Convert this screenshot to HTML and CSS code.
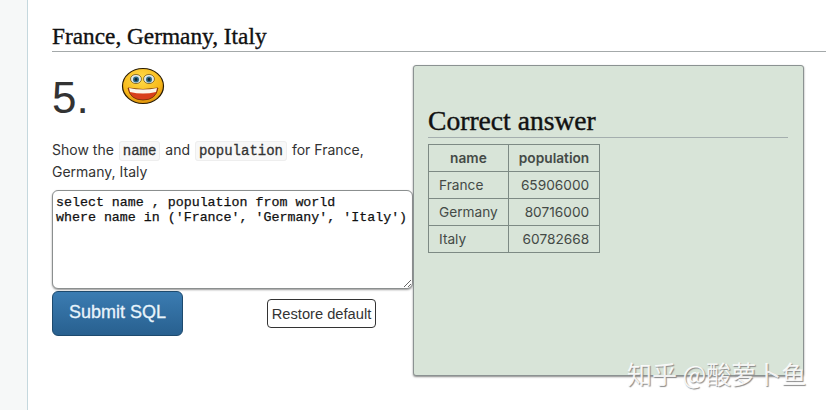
FILE: index.html
```html
<!DOCTYPE html>
<html>
<head>
    <meta charset="utf-8">
    <title>France, Germany, Italy</title>
    <link rel="stylesheet" href="styles.css">
</head>
<body>
    <div class="page">
        <div class="sidebar"></div>
        <div class="content">
            <h2 class="section-title">France, Germany, Italy</h2>
            <div class="quiz">
                <div class="question">
                    <div class="question-head">
                        <span class="number">5.</span>
                        <svg class="smiley" width="44" height="38" viewBox="0 0 44 38">
                            <defs>
                                <radialGradient id="face" cx="0.45" cy="0.3" r="0.75">
                                    <stop offset="0" stop-color="#ffdc4a"/>
                                    <stop offset="0.65" stop-color="#f8b91a"/>
                                    <stop offset="1" stop-color="#d98a08"/>
                                </radialGradient>
                            </defs>
                            <ellipse cx="22" cy="19" rx="20.5" ry="17.5" fill="url(#face)" stroke="#2a1c04" stroke-width="1.2"/>
                            <ellipse cx="15" cy="12" rx="5.5" ry="4.6" fill="#dfe6e4" stroke="#7a5a10" stroke-width="0.8"/>
                            <ellipse cx="28" cy="12" rx="5.5" ry="4.6" fill="#dfe6e4" stroke="#7a5a10" stroke-width="0.8"/>
                            <circle cx="15" cy="12.5" r="3" fill="#2c6a86"/>
                            <circle cx="28" cy="12.5" r="3" fill="#2c6a86"/>
                            <circle cx="15" cy="12.5" r="1.4" fill="#10222c"/>
                            <circle cx="28" cy="12.5" r="1.4" fill="#10222c"/>
                            <path d="M7 21 Q22 24 37 21 Q35 33 22 33 Q9 33 7 21 Z" fill="#d8401a" stroke="#6b2a08" stroke-width="0.8"/>
                            <path d="M8 21 Q22 24 36 21 L35 25 Q22 28 9 25 Z" fill="#fbf6ea"/>
                        </svg>
                    </div>
                    <p class="prompt">Show the <code>name</code> and <code>population</code> for France, Germany, Italy</p>
                    <textarea class="sql" spellcheck="false">select name , population from world
where name in ('France', 'Germany', 'Italy')</textarea>
                    <div class="actions">
                        <button class="submit">Submit SQL</button>
                        <button class="restore">Restore default</button>
                    </div>
                </div>
                <div class="answer">
                    <h2 class="answer-title">Correct answer</h2>
                    <table class="result">
                        <tr><th>name</th><th>population</th></tr>
                        <tr><td>France</td><td class="num">65906000</td></tr>
                        <tr><td>Germany</td><td class="num">80716000</td></tr>
                        <tr><td>Italy</td><td class="num">60782668</td></tr>
                    </table>
                </div>
            </div>
        </div>
    </div>
    <div class="watermark">知乎 @酸萝卜鱼</div>
</body>
</html>
```

FILE: styles.css
```css
html, body{
    margin: 0;
    height: 410px;
    overflow: hidden;
    background-color: #ffffff;
}

body{
    position: relative;
    font-family: "Inter", "Liberation Sans", sans-serif;
    color: #333333;
}

.page{
    display: flex;
    height: 410px;
}

.sidebar{
    width: 27px;
    flex-shrink: 0;
    background-color: #f6f8f8;
    border-right: 1px solid #c5d8de;
}

.content{
    flex: 1;
    padding-left: 24px;
    min-width: 0;
}

.section-title{
    margin: 24px 0 0;
    height: 27px;
    line-height: 25px;
    font-family: "Liberation Serif", serif;
    font-size: 23.3px;
    font-weight: 400;
    -webkit-text-stroke: 0.35px #111111;
    color: #111111;
    border-bottom: 1px solid #a4a9aa;
}

.quiz{
    display: flex;
    align-items: flex-start;
    margin-top: 14px;
}

.question{
    width: 361px;
    flex-shrink: 0;
}

.question-head{
    display: flex;
    align-items: flex-start;
    height: 73px;
}

.number{
    margin-top: 7px;
    width: 69px;
    font-family: "Liberation Sans", sans-serif;
    font-size: 44px;
    line-height: 50px;
    color: #333333;
}

.smiley{
    margin-top: 1px;
}

.prompt{
    margin: 0 0 7px;
    width: 330px;
    font-size: 14px;
    line-height: 22px;
    color: #333333;
}

code{
    font-family: "Liberation Mono", monospace;
    font-size: 14px;
    line-height: 1;
    -webkit-text-stroke: 0.3px #333333;
    color: #333333;
    background-color: #f8f8f8;
    border: 1px solid #eeeeee;
    border-radius: 3px;
    margin: 0 1px;
    padding: 1px 3px;
}

.sql{
    display: block;
    box-sizing: border-box;
    width: 361px;
    height: 99px;
    margin: 0;
    padding: 4px 3px;
    border: 1px solid #8b8f8f;
    border-radius: 6px;
    box-shadow: 0 1px 2px #999999;
    font-family: "Liberation Mono", monospace;
    font-size: 13.3px;
    -webkit-text-stroke: 0.25px #111111;
    line-height: 15px;
    color: #111111;
    background-color: #ffffff;
    white-space: pre;
    overflow: hidden;
}

.actions{
    display: flex;
    align-items: center;
    margin-top: 2px;
}

.submit{
    width: 131px;
    height: 45px;
    border: 1px solid #1d4a6e;
    border-radius: 6px;
    background: linear-gradient(#3b7cb2, #28608f);
    color: #e8f4fb;
    font-family: "Liberation Sans", sans-serif;
    font-size: 18px;
    -webkit-text-stroke: 0.3px #e8f4fb;
    padding: 0 0 3px;
}

.restore{
    width: 109px;
    height: 29px;
    margin-left: 84px;
    border: 1px solid #333333;
    border-radius: 4px;
    background-color: #ffffff;
    color: #333333;
    font-family: "Liberation Sans", sans-serif;
    font-size: 14.7px;
    padding: 0;
}

.answer{
    box-sizing: border-box;
    width: 391px;
    height: 311px;
    margin-top: -1px;
    padding: 38px 15px 0 14px;
    background-color: #d8e4d8;
    border: 1px solid #8b9292;
    border-radius: 3px;
    box-shadow: 0 1px 2px #888888;
}

.answer-title{
    margin: 0;
    height: 33px;
    line-height: 33px;
    font-family: "Liberation Serif", serif;
    font-size: 27.6px;
    font-weight: 400;
    -webkit-text-stroke: 0.4px #111111;
    color: #111111;
    border-bottom: 1px solid #a4aeae;
}

.result{
    border-collapse: collapse;
    margin-top: 6px;
    font-size: 13.7px;
    color: #444a46;
}

.result th, .result td{
    box-sizing: border-box;
    height: 27px;
    padding: 0 10px;
    border: 1px solid #7d8a84;
}

.result th{
    font-weight: 600;
    text-align: center;
}

.result td.num{
    text-align: right;
}

.watermark{
    position: absolute;
    left: 627px;
    top: 358px;
    font-family: "Noto Sans CJK SC", sans-serif;
    font-size: 25px;
    line-height: 30px;
    color: rgba(255, 255, 255, 0.9);
    text-shadow: 1px 1px 1px #8a8a8a;
    white-space: nowrap;
}
```
